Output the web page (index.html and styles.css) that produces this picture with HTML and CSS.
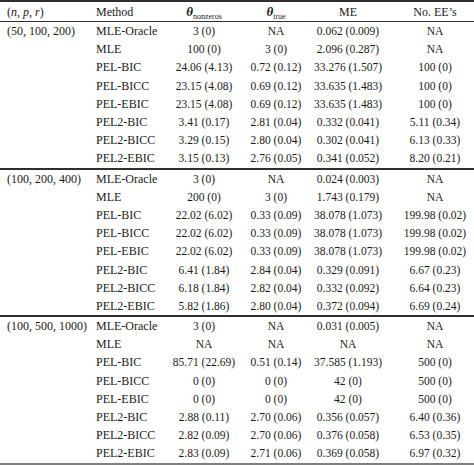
FILE: index.html
```html
<!DOCTYPE html>
<html>
<head>
<meta charset="utf-8">
<link rel="stylesheet" href="styles.css">
</head>
<body>
<table class="tbl">
  <colgroup>
    <col class="c1"><col class="c2"><col class="c3"><col class="c4"><col class="c5"><col class="c6">
  </colgroup>
  <thead>
    <tr class="head">
      <th class="lab">(<i>n</i>, <i>p</i>, <i>r</i>)</th>
      <th class="meth">Method</th>
      <th class="num"><b class="theta">θ</b><sub>nonzeros</sub></th>
      <th class="num"><b class="theta">θ</b><sub>true</sub></th>
      <th class="num">ME</th>
      <th class="num last">No. EE’s</th>
    </tr>
  </thead>
  <tbody>
    <tr><td class="lab">(50, 100, 200)</td><td class="meth">MLE-Oracle</td><td class="num">3 (0)</td><td class="num">NA</td><td class="num">0.062 (0.009)</td><td class="num last">NA</td></tr>
    <tr><td class="lab"></td><td class="meth">MLE</td><td class="num">100 (0)</td><td class="num">3 (0)</td><td class="num">2.096 (0.287)</td><td class="num last">NA</td></tr>
    <tr><td class="lab"></td><td class="meth">PEL-BIC</td><td class="num">24.06 (4.13)</td><td class="num">0.72 (0.12)</td><td class="num">33.276 (1.507)</td><td class="num last">100 (0)</td></tr>
    <tr><td class="lab"></td><td class="meth">PEL-BICC</td><td class="num">23.15 (4.08)</td><td class="num">0.69 (0.12)</td><td class="num">33.635 (1.483)</td><td class="num last">100 (0)</td></tr>
    <tr><td class="lab"></td><td class="meth">PEL-EBIC</td><td class="num">23.15 (4.08)</td><td class="num">0.69 (0.12)</td><td class="num">33.635 (1.483)</td><td class="num last">100 (0)</td></tr>
    <tr><td class="lab"></td><td class="meth">PEL2-BIC</td><td class="num">3.41 (0.17)</td><td class="num">2.81 (0.04)</td><td class="num">0.332 (0.041)</td><td class="num last">5.11 (0.34)</td></tr>
    <tr><td class="lab"></td><td class="meth">PEL2-BICC</td><td class="num">3.29 (0.15)</td><td class="num">2.80 (0.04)</td><td class="num">0.302 (0.041)</td><td class="num last">6.13 (0.33)</td></tr>
    <tr class="gend"><td class="lab"></td><td class="meth">PEL2-EBIC</td><td class="num">3.15 (0.13)</td><td class="num">2.76 (0.05)</td><td class="num">0.341 (0.052)</td><td class="num last">8.20 (0.21)</td></tr>

    <tr><td class="lab">(100, 200, 400)</td><td class="meth">MLE-Oracle</td><td class="num">3 (0)</td><td class="num">NA</td><td class="num">0.024 (0.003)</td><td class="num last">NA</td></tr>
    <tr><td class="lab"></td><td class="meth">MLE</td><td class="num">200 (0)</td><td class="num">3 (0)</td><td class="num">1.743 (0.179)</td><td class="num last">NA</td></tr>
    <tr><td class="lab"></td><td class="meth">PEL-BIC</td><td class="num">22.02 (6.02)</td><td class="num">0.33 (0.09)</td><td class="num">38.078 (1.073)</td><td class="num last">199.98 (0.02)</td></tr>
    <tr><td class="lab"></td><td class="meth">PEL-BICC</td><td class="num">22.02 (6.02)</td><td class="num">0.33 (0.09)</td><td class="num">38.078 (1.073)</td><td class="num last">199.98 (0.02)</td></tr>
    <tr><td class="lab"></td><td class="meth">PEL-EBIC</td><td class="num">22.02 (6.02)</td><td class="num">0.33 (0.09)</td><td class="num">38.078 (1.073)</td><td class="num last">199.98 (0.02)</td></tr>
    <tr><td class="lab"></td><td class="meth">PEL2-BIC</td><td class="num">6.41 (1.84)</td><td class="num">2.84 (0.04)</td><td class="num">0.329 (0.091)</td><td class="num last">6.67 (0.23)</td></tr>
    <tr><td class="lab"></td><td class="meth">PEL2-BICC</td><td class="num">6.18 (1.84)</td><td class="num">2.82 (0.04)</td><td class="num">0.332 (0.092)</td><td class="num last">6.64 (0.23)</td></tr>
    <tr class="gend"><td class="lab"></td><td class="meth">PEL2-EBIC</td><td class="num">5.82 (1.86)</td><td class="num">2.80 (0.04)</td><td class="num">0.372 (0.094)</td><td class="num last">6.69 (0.24)</td></tr>

    <tr><td class="lab">(100, 500, 1000)</td><td class="meth">MLE-Oracle</td><td class="num">3 (0)</td><td class="num">NA</td><td class="num">0.031 (0.005)</td><td class="num last">NA</td></tr>
    <tr><td class="lab"></td><td class="meth">MLE</td><td class="num">NA</td><td class="num">NA</td><td class="num">NA</td><td class="num last">NA</td></tr>
    <tr><td class="lab"></td><td class="meth">PEL-BIC</td><td class="num">85.71 (22.69)</td><td class="num">0.51 (0.14)</td><td class="num">37.585 (1.193)</td><td class="num last">500 (0)</td></tr>
    <tr><td class="lab"></td><td class="meth">PEL-BICC</td><td class="num">0 (0)</td><td class="num">0 (0)</td><td class="num">42 (0)</td><td class="num last">500 (0)</td></tr>
    <tr><td class="lab"></td><td class="meth">PEL-EBIC</td><td class="num">0 (0)</td><td class="num">0 (0)</td><td class="num">42 (0)</td><td class="num last">500 (0)</td></tr>
    <tr><td class="lab"></td><td class="meth">PEL2-BIC</td><td class="num">2.88 (0.11)</td><td class="num">2.70 (0.06)</td><td class="num">0.356 (0.057)</td><td class="num last">6.40 (0.36)</td></tr>
    <tr><td class="lab"></td><td class="meth">PEL2-BICC</td><td class="num">2.82 (0.09)</td><td class="num">2.70 (0.06)</td><td class="num">0.376 (0.058)</td><td class="num last">6.53 (0.35)</td></tr>
    <tr class="bend"><td class="lab"></td><td class="meth">PEL2-EBIC</td><td class="num">2.83 (0.09)</td><td class="num">2.71 (0.06)</td><td class="num">0.369 (0.058)</td><td class="num last">6.97 (0.32)</td></tr>
  </tbody>
</table>
</body>
</html>
```
FILE: styles.css
```css
html, body {
  margin: 0;
  padding: 0;
  background: #ffffff;
}
body {
  width: 474px;
  height: 465px;
  overflow: hidden;
  font-family: "Liberation Serif", "Times New Roman", serif;
  font-size: 12px;
  color: #1a1a1a;
}
.tbl {
  width: 474px;
  border-collapse: collapse;
  table-layout: fixed;
  border-top: 2px solid #2e2e2e;
}
.c1 { width: 90px; }
.c2 { width: 80px; }
.c3 { width: 68px; }
.c4 { width: 76px; }
.c5 { width: 68px; }
.c6 { width: 92px; }
th, td {
  padding: 0;
  white-space: nowrap;
  font-weight: normal;
  line-height: 14px;
}
.head th {
  height: 19px;
  border-bottom: 1px solid #2e2e2e;
}
tbody td {
  height: 18.2px;
}
tbody td.num {
  font-size: 11.5px;
}
.lab {
  text-align: left;
  padding-left: 7px;
}
.meth {
  text-align: left;
  padding-left: 6px;
}
.num {
  text-align: center;
}
.last {
  padding-left: 14px;
}
.gend td {
  border-bottom: 2px solid #2e2e2e;
}
.bend td {
  border-bottom: 3px solid #7f7f7f;
}
.theta {
  font-style: italic;
  font-weight: bold;
  font-size: 13px;
}
sub {
  font-size: 8px;
  vertical-align: -3px;
  line-height: 0;
}
i {
  font-style: italic;
}
```
